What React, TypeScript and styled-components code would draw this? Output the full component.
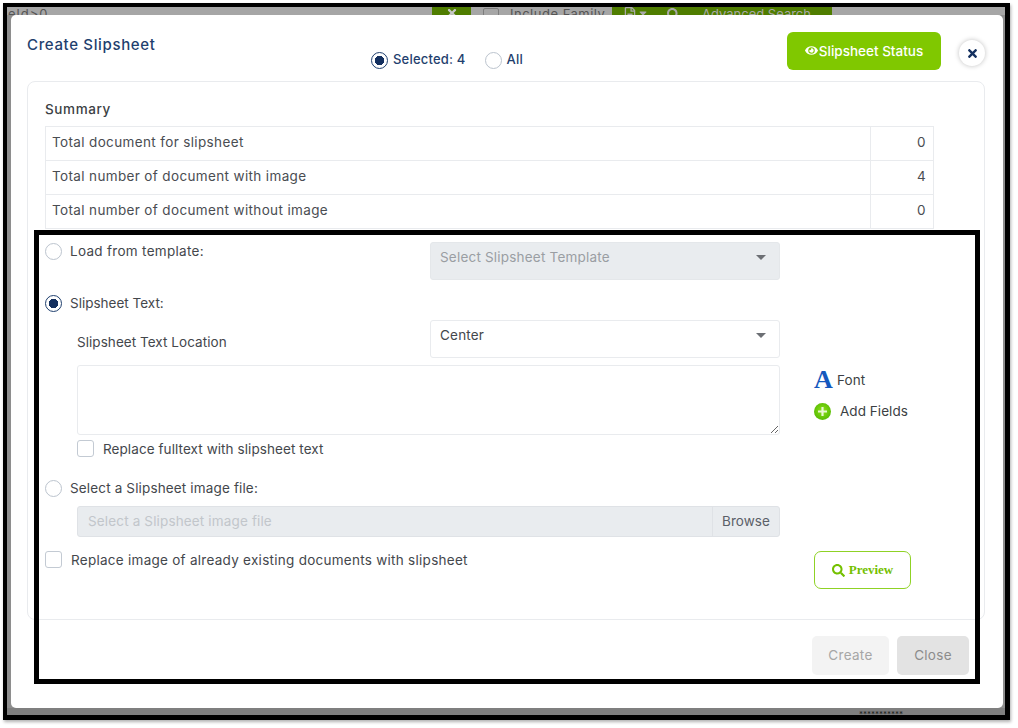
import styled, { createGlobalStyle } from "styled-components";
import { FaEye, FaSearch, FaTimes, FaRegFileAlt, FaCaretDown } from "react-icons/fa";

const GlobalStyle = createGlobalStyle`
html, body {
margin: 0;
padding: 0;
background-color: white;
}
body {
font-family: "Inter", "Open Sans", sans-serif;
color: #3c3f44;
}
`;

const Screen = styled.div`
width: 1018px;
height: 728px;
padding: 3px 8px 8px 3px;
box-sizing: border-box;
`;

const Frame = styled.div`
height: 100%;
border: 4px solid black;
border-right-width: 5px;
border-bottom-width: 5px;
background-color: #8e8e8e;
box-shadow: 1px 2px 3px rgba(0, 0, 0, 0.3);
box-sizing: border-box;
display: flex;
flex-direction: column;
overflow: hidden;
`;

const BackStrip = styled.div`
height: 8px;
flex-shrink: 0;
display: flex;
background-color: #a6a6a6;
overflow: hidden;
font-size: 13px;
line-height: 14px;
color: #555;
white-space: nowrap;
`;

const BackText = styled.span`
width: 425px;
padding-left: 1px;
letter-spacing: 1px;
box-sizing: border-box;
`;

const BackChip = styled.div`
width: 39px;
background-color: #4f7d00;
display: flex;
justify-content: center;
color: #c8c8c8;
font-size: 12px;
`;

const BackFamily = styled.div`
width: 141px;
display: flex;
padding-left: 12px;
gap: 11px;
box-sizing: border-box;
letter-spacing: 0.5px;
`;

const BackCheck = styled.span`
width: 14px;
height: 14px;
margin-top: 1px;
border: 1px solid #7d7d7d;
border-radius: 2px;
`;

const BackToolbar = styled.div`
width: 220px;
background-color: #4f7d00;
padding-left: 11px;
box-sizing: border-box;
display: flex;
align-items: flex-start;
color: #a9a9a9;
`;

const BackSearch = styled.span`
margin: 1px 22px 0 18px;
font-size: 13px;
`;

const BackBottom = styled.div`
flex: 1;
display: flex;
justify-content: flex-end;
padding: 2px 102px 0 0;
font-size: 8px;
line-height: 8px;
color: #222;
background-color: #7f7f7f;
`;

const Dialog = styled.div`
position: relative;
height: 693px;
flex-shrink: 0;
margin: 0 2px 0 4px;
background-color: white;
border-radius: 5px;
display: flex;
flex-direction: column;
padding: 0 18px 0 16px;
box-sizing: border-box;
`;

const Header = styled.header`
height: 66px;
flex-shrink: 0;
padding-top: 17px;
box-sizing: border-box;
display: flex;
align-items: flex-start;
`;

const Title = styled.h1`
margin: 4px 0 0;
width: 344px;
font-size: 15px;
line-height: 18px;
font-weight: 500;
color: #1f3f6e;
letter-spacing: 0.65px;
`;

const Scope = styled.div`
margin-top: 18px;
display: flex;
align-items: flex-start;
gap: 19px;
`;

const ScopeOption = styled.label`
display: flex;
align-items: flex-start;
gap: 5px;
font-size: 13px;
line-height: 18px;
font-weight: 500;
letter-spacing: 0.2px;
color: #1f3f6e;
`;

const Radio = styled.input.attrs({ type: "radio", readOnly: true })`
appearance: none;
margin: 0;
width: 17px;
height: 17px;
flex-shrink: 0;
border: 1px solid ${(props) => (props.checked ? "#1f3f6e" : "#bcc4ce")};
border-radius: 50%;
background: ${(props) =>
  props.checked ? "radial-gradient(circle, #14305f 0 4.5px, white 5px)" : "white"};
`;

const ScopeRadio = styled(Radio)`
margin-top: 2px;
`;

const StatusButton = styled.button`
margin-left: auto;
width: 154px;
height: 38px;
border: none;
border-radius: 6px;
background-color: #80c800;
color: white;
font-family: inherit;
font-size: 13.5px;
font-weight: 500;
display: flex;
align-items: center;
justify-content: center;
gap: 1px;
padding: 0 0 1px;
`;

const CloseButton = styled.button`
width: 26px;
height: 26px;
margin: 8px 0 0 18px;
border: none;
border-radius: 50%;
background-color: white;
box-shadow: 0 0 5px rgba(0, 0, 0, 0.25);
color: #14305f;
display: flex;
align-items: center;
justify-content: center;
padding: 0;
font-size: 13px;
`;

const Card = styled.section`
height: 539px;
flex-shrink: 0;
border: 1px solid #e9ebee;
border-radius: 8px;
padding: 18px 17px 0;
box-sizing: border-box;
`;

const Heading = styled.h2`
margin: 0 0 8px;
font-size: 13.5px;
line-height: 18px;
font-weight: 500;
color: #3c3f44;
letter-spacing: 0.6px;
`;

const SummaryTable = styled.table`
width: 889px;
border-collapse: collapse;
font-size: 13.5px;
`;

const Cell = styled.td<{ $value?: boolean }>`
height: 34px;
box-sizing: border-box;
padding: 0 6px 4px;
border: 1px solid #e9ebee;
letter-spacing: 0.36px;
color: #4a4d52;
${(props) => props.$value && "width: 63px; padding-right: 7px; text-align: right;"}
`;

const FormGrid = styled.div`
display: grid;
grid-template-columns: 735px 1fr;
column-gap: 34px;
`;

const FormColumn = styled.div`
display: flex;
flex-direction: column;
`;

const SideColumn = styled.div`
display: flex;
flex-direction: column;
align-items: flex-start;
padding-top: 142px;
`;

const FieldRow = styled.div`
display: grid;
grid-template-columns: 1fr 350px;
`;

const TemplateRow = styled(FieldRow)`
margin-top: 13px;
`;

const LocationRow = styled(FieldRow)`
margin-top: 8px;
padding-left: 32px;
`;

const OptionLabel = styled.label<{ $top?: number; $track: number }>`
display: flex;
align-items: center;
align-self: start;
gap: 8px;
margin-top: ${(props) => props.$top ?? 0}px;
font-size: 13.5px;
line-height: 18px;
letter-spacing: ${(props) => props.$track}px;
color: #44474c;
`;

const FieldLabel = styled.span`
padding-top: 13px;
font-size: 13.5px;
line-height: 18px;
letter-spacing: 0.05px;
color: #44474c;
`;

const SelectBox = styled.div<{ $disabled?: boolean }>`
position: relative;
height: 38px;
box-sizing: border-box;
padding: 5px 9px;
border: 1px solid ${(props) => (props.$disabled ? "#e4e7ea" : "#e9ebee")};
border-radius: 3px;
background-color: ${(props) => (props.$disabled ? "#e9ecef" : "white")};
color: ${(props) => (props.$disabled ? "#9a9ea3" : "#44474c")};
font-size: 13.5px;
line-height: 18px;
letter-spacing: 0.2px;
&::after {
  content: "";
  position: absolute;
  right: 13px;
  top: 12px;
  border-left: 5px solid transparent;
  border-right: 5px solid transparent;
  border-top: 5px solid #6c6f74;
}
`;

const TextArea = styled.textarea`
display: block;
margin: 7px 0 0 32px;
width: 703px;
height: 70px;
box-sizing: border-box;
border: 1px solid #e9ebee;
border-radius: 3px;
outline: none;
`;

const CheckLabel = styled.label<{ $indent: number; $top: number; $track: number }>`
display: flex;
align-items: center;
gap: 9px;
margin: ${(props) => props.$top}px 0 0 ${(props) => props.$indent}px;
font-size: 13.5px;
line-height: 16px;
letter-spacing: ${(props) => props.$track}px;
color: #44474c;
`;

const CheckBox = styled.input.attrs({ type: "checkbox" })`
appearance: none;
margin: 0;
width: 17px;
height: 17px;
flex-shrink: 0;
border: 1px solid #c3cad3;
border-radius: 3px;
background-color: white;
`;

const FileGroup = styled.div`
margin: 9px 0 0 32px;
height: 31px;
display: flex;
box-sizing: border-box;
border: 1px solid #dfe2e6;
border-radius: 3px;
background-color: #e9ecef;
font-size: 13.5px;
line-height: 29px;
letter-spacing: 0.15px;
`;

const FilePlaceholder = styled.span`
flex: 1;
padding-left: 10px;
color: #c2c6cb;
`;

const BrowseLabel = styled.span`
width: 66px;
border-left: 1px solid #dfe2e6;
text-align: center;
letter-spacing: 0.05px;
color: #5b6068;
`;

const ToolLink = styled.div<{ $gap: number }>`
height: 18px;
display: flex;
align-items: center;
gap: ${(props) => props.$gap}px;
margin-bottom: 13px;
font-size: 13.5px;
letter-spacing: 0.05px;
color: #3c3f44;
`;

const FontGlyph = styled.span`
width: 17px;
font-family: "Liberation Serif", serif;
font-size: 26px;
line-height: 18px;
font-weight: bold;
text-align: center;
color: #1558bd;
`;

const PreviewButton = styled.button`
margin-top: 118px;
width: 97px;
height: 38px;
border: 1.5px solid #8fd225;
border-radius: 7px;
background-color: white;
color: #74c000;
font-family: "Liberation Serif", serif;
font-size: 13px;
font-weight: bold;
display: flex;
align-items: center;
justify-content: center;
gap: 4px;
padding: 0;
`;

const Footer = styled.footer`
flex: 1;
display: flex;
justify-content: flex-end;
align-items: flex-start;
gap: 8px;
padding: 16px 16px 0 0;
`;

const FooterButton = styled.button<{ $width: number; $shade: string; $ink: string }>`
width: ${(props) => props.$width}px;
height: 39px;
border: none;
border-radius: 5px;
background-color: ${(props) => props.$shade};
color: ${(props) => props.$ink};
font-family: inherit;
font-size: 13.5px;
letter-spacing: 0.3px;
padding: 0 0 2px;
`;

const Callout = styled.div`
position: absolute;
left: 23px;
top: 215px;
width: 946px;
height: 454px;
border: 5px solid black;
box-sizing: border-box;
pointer-events: none;
`;

function AddFieldsIcon() {
    return (
        <svg width="17" height="17" viewBox="0 0 17 17">
            <defs>
                <radialGradient id="addGreen" cx="50%" cy="45%" r="60%">
                    <stop offset="0%" stopColor="#8fe21a" />
                    <stop offset="100%" stopColor="#52b800" />
                </radialGradient>
            </defs>
            <circle cx="8.5" cy="8.5" r="8.5" fill="url(#addGreen)" />
            <path d="M8.5 4v9M4 8.5h9" stroke="#e8f7d2" strokeWidth="2.2" />
        </svg>
    );
}

const rows = [
    { label: "Total document for slipsheet", value: 0 },
    { label: "Total number of document with image", value: 4 },
    { label: "Total number of document without image", value: 0 },
];

export default function App() {
    return (
        <Screen>
            <GlobalStyle />
            <Frame>
                <BackStrip>
                    <BackText>eld&gt;0</BackText>
                    <BackChip><FaTimes /></BackChip>
                    <BackFamily><BackCheck />Include Family</BackFamily>
                    <BackToolbar>
                        <FaRegFileAlt size={14} />
                        <FaCaretDown size={12} />
                        <BackSearch><FaSearch /></BackSearch>
                        Advanced Search
                    </BackToolbar>
                </BackStrip>
                <Dialog>
                    <Header>
                        <Title>Create Slipsheet</Title>
                        <Scope>
                            <ScopeOption><ScopeRadio checked />Selected: 4</ScopeOption>
                            <ScopeOption><ScopeRadio checked={false} />All</ScopeOption>
                        </Scope>
                        <StatusButton><FaEye size={13} />Slipsheet Status</StatusButton>
                        <CloseButton><FaTimes /></CloseButton>
                    </Header>
                    <Card>
                        <Heading>Summary</Heading>
                        <SummaryTable>
                            <tbody>
                                {rows.map((row) => (
                                    <tr key={row.label}>
                                        <Cell>{row.label}</Cell>
                                        <Cell $value>{row.value}</Cell>
                                    </tr>
                                ))}
                            </tbody>
                        </SummaryTable>
                        <FormGrid>
                            <FormColumn>
                                <TemplateRow>
                                    <OptionLabel $track={0.3}><Radio checked={false} />Load from template:</OptionLabel>
                                    <SelectBox $disabled>Select Slipsheet Template</SelectBox>
                                </TemplateRow>
                                <OptionLabel $top={14} $track={0}><Radio checked />Slipsheet Text:</OptionLabel>
                                <LocationRow>
                                    <FieldLabel>Slipsheet Text Location</FieldLabel>
                                    <SelectBox>Center</SelectBox>
                                </LocationRow>
                                <TextArea />
                                <CheckLabel $indent={32} $top={5} $track={0.08}><CheckBox />Replace fulltext with slipsheet text</CheckLabel>
                                <OptionLabel $top={22} $track={0.15}><Radio checked={false} />Select a Slipsheet image file:</OptionLabel>
                                <FileGroup>
                                    <FilePlaceholder>Select a Slipsheet image file</FilePlaceholder>
                                    <BrowseLabel>Browse</BrowseLabel>
                                </FileGroup>
                                <CheckLabel $indent={0} $top={14} $track={0.27}><CheckBox />Replace image of already existing documents with slipsheet</CheckLabel>
                            </FormColumn>
                            <SideColumn>
                                <ToolLink $gap={6}><FontGlyph>A</FontGlyph>Font</ToolLink>
                                <ToolLink $gap={9}><AddFieldsIcon />Add Fields</ToolLink>
                                <PreviewButton><FaSearch size={13} />Preview</PreviewButton>
                            </SideColumn>
                        </FormGrid>
                    </Card>
                    <Footer>
                        <FooterButton $width={77} $shade="#f3f3f3" $ink="#a6a6a6">Create</FooterButton>
                        <FooterButton $width={72} $shade="#e3e3e3" $ink="#8c8c8c">Close</FooterButton>
                    </Footer>
                    <Callout />
                </Dialog>
                <BackBottom>***********</BackBottom>
            </Frame>
        </Screen>
    );
}
